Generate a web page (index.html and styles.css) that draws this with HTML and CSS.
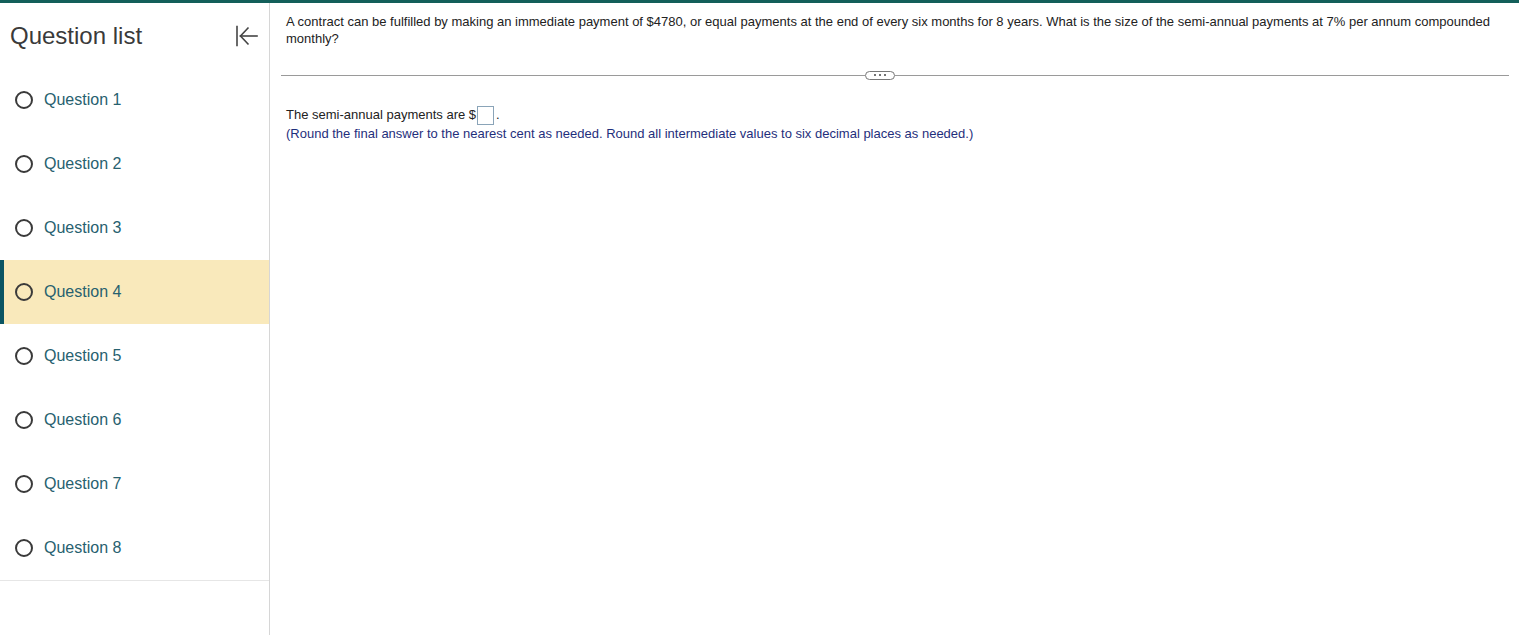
FILE: index.html
```html
<!DOCTYPE html>
<html>
<head>
<meta charset="utf-8">
<link rel="stylesheet" href="styles.css">
</head>
<body>
<div class="topbar"></div>
<div class="layout">
  <aside class="sidebar">
    <div class="side-head">
      <h1 class="side-title">Question list</h1>
      <button class="collapse" aria-label="Collapse">
        <svg width="24" height="24" viewBox="0 0 24 24" fill="none" stroke="#444" stroke-width="1.6" stroke-linecap="square">
          <line x1="3" y1="2.5" x2="3" y2="21.5"/>
          <line x1="6.5" y1="12" x2="23" y2="12"/>
          <polyline points="14.5,3.5 6.5,12 14.5,20.5" stroke-linecap="butt" fill="none"/>
        </svg>
      </button>
    </div>
    <ul class="qlist">
      <li class="qitem"><span class="radio"></span><span class="qlabel">Question 1</span></li>
      <li class="qitem"><span class="radio"></span><span class="qlabel">Question 2</span></li>
      <li class="qitem"><span class="radio"></span><span class="qlabel">Question 3</span></li>
      <li class="qitem active"><span class="radio"></span><span class="qlabel">Question 4</span></li>
      <li class="qitem"><span class="radio"></span><span class="qlabel">Question 5</span></li>
      <li class="qitem"><span class="radio"></span><span class="qlabel">Question 6</span></li>
      <li class="qitem"><span class="radio"></span><span class="qlabel">Question 7</span></li>
      <li class="qitem"><span class="radio"></span><span class="qlabel">Question 8</span></li>
    </ul>
  </aside>
  <main class="main">
    <p class="question">A contract can be fulfilled by making an immediate payment of $4780, or equal payments at the end of every six months for 8 years. What is the size of the semi-annual payments at 7% per annum compounded monthly?</p>
    <div class="divider">
      <span class="rule rule-left"></span>
      <span class="pill"><span class="dot"></span><span class="dot"></span><span class="dot"></span></span>
      <span class="rule rule-right"></span>
    </div>
    <div class="answer">
      <p class="answer-line">The semi-annual payments are $<span class="ansbox"></span>.</p>
      <p class="hint">(Round the final answer to the nearest cent as needed. Round all intermediate values to six decimal places as needed.)</p>
    </div>
  </main>
</div>
</body>
</html>
```
FILE: styles.css
```css
html, body {
  margin: 0;
  padding: 0;
  height: 100%;
  background: #fff;
  font-family: "Liberation Sans", Arial, sans-serif;
}
body {
  display: flex;
  flex-direction: column;
  overflow: hidden;
}
.topbar {
  height: 3px;
  background: #135f5a;
  flex: 0 0 3px;
}
.layout {
  display: flex;
  flex: 1;
  min-height: 0;
}
.sidebar {
  width: 269px;
  flex: 0 0 269px;
  border-right: 1px solid #d6d6d6;
  display: flex;
  flex-direction: column;
}
.side-head {
  height: 65px;
  display: flex;
  align-items: center;
  justify-content: space-between;
  padding: 0 10px 0 10px;
  box-sizing: border-box;
}
.side-title {
  margin: 0;
  font-size: 24px;
  font-weight: normal;
  color: #3a3a3a;
  position: relative;
  top: 0;
}
.collapse {
  border: 0;
  background: none;
  padding: 0;
  width: 24px;
  height: 24px;
  margin-right: 1px;
  cursor: pointer;
}
.collapse svg { display: block; }
.qlist {
  list-style: none;
  margin: 0;
  padding: 0;
  border-bottom: 1px solid #e6e6e6;
}
.qitem {
  height: 64px;
  display: flex;
  align-items: center;
  padding-left: 15px;
  box-sizing: border-box;
}
.qitem.active {
  background: #f9e9bb;
  box-shadow: inset 4px 0 0 #0b5563;
}
.radio {
  width: 14px;
  height: 14px;
  border: 2px solid #3a3a3a;
  border-radius: 50%;
  flex: 0 0 auto;
}
.qlabel {
  margin-left: 11px;
  font-size: 16px;
  color: #27616f;
}
.main {
  flex: 1;
  padding: 10px 10px 0 11px;
  min-width: 0;
}
.question {
  margin: 0;
  padding-left: 5px;
  font-size: 13px;
  line-height: 17px;
  color: #222;
}
.divider {
  display: flex;
  align-items: center;
  margin-top: 23px;
  height: 10px;
}
.rule {
  height: 1px;
  background: #9a9a9a;
}
.rule-left { flex: 0 0 584px; }
.rule-right { flex: 1; }
.pill {
  width: 30px;
  height: 9px;
  box-sizing: border-box;
  border: 1px solid #777;
  border-radius: 5px;
  display: flex;
  align-items: center;
  justify-content: center;
  gap: 3px;
  background: #fff;
}
.dot {
  width: 2px;
  height: 2px;
  background: #444;
  border-radius: 50%;
}
.answer {
  padding-left: 5px;
  margin-top: 25px;
}
.answer-line {
  margin: 0;
  font-size: 13px;
  line-height: 20px;
  color: #222;
  display: flex;
  align-items: center;
}
.ansbox {
  display: inline-block;
  width: 15px;
  height: 17px;
  border: 1px solid #8aa4b8;
  margin-left: 1px;
  margin-right: 2px;
}
.hint {
  margin: 0;
  font-size: 13px;
  line-height: 18px;
  color: #1f2f7c;
}
```
